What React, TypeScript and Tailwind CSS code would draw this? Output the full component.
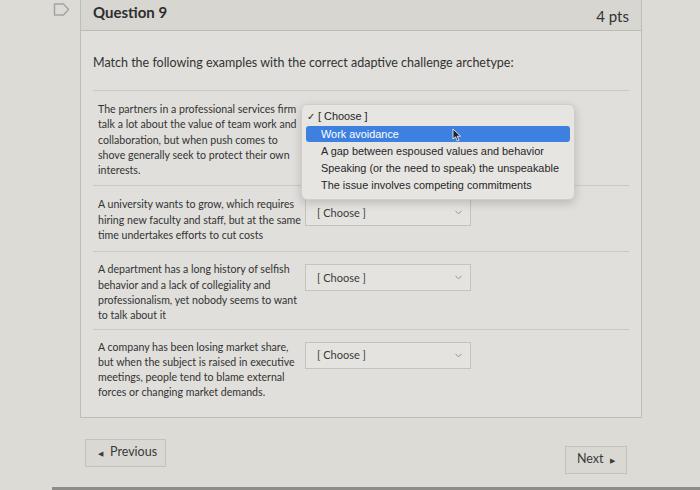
import { ChevronDown } from 'lucide-react';

const rows = [
  {
    text: 'The partners in a professional services firm talk a lot about the value of team work and collaboration, but when push comes to shove generally seek to protect their own interests.',
    open: true,
    pt: 'pt-[11px]',
    pb: 'pb-[7px]',
  },
  {
    text: 'A university wants to grow, which requires hiring new faculty and staff, but at the same time undertakes efforts to cut costs',
    open: false,
    pt: 'pt-[11px]',
    pb: 'pb-[8px]',
  },
  {
    text: 'A department has a long history of selfish behavior and a lack of collegiality and professionalism, yet nobody seems to want to talk about it',
    open: false,
    pt: 'pt-[10px]',
    pb: 'pb-[5px]',
  },
  {
    text: 'A company has been losing market share, but when the subject is raised in executive meetings, people tend to blame external forces or changing market demands.',
    open: false,
    pt: 'pt-[10px]',
    pb: 'pb-[16px]',
  },
];

const options = [
  'Work avoidance',
  'A gap between espoused values and behavior',
  'Speaking (or the need to speak) the unspeakable',
  'The issue involves competing commitments',
];

function Select({ hidden }: { hidden?: boolean }) {
  return (
    <div
      className={`flex h-[27px] w-[166px] items-center justify-between border border-[#c4c3be] bg-[#e4e3df] pl-[11px] pr-[6px] text-[11px] text-[#3b3b3b] ${hidden ? 'invisible' : ''}`}
    >
      <span>[ Choose ]</span>
      <ChevronDown size={11} strokeWidth={2} className="text-[#8c8c8c]" />
    </div>
  );
}

function Popup() {
  return (
    <div
      className="absolute left-[-4px] top-[2px] z-10 w-[274px] whitespace-nowrap rounded-[6px] border border-[#cfcecb] bg-[#e6e5e2] px-[4px] pb-[5px] pt-[3px] text-[10.9px] text-[#262626] shadow-[0_3px_10px_rgba(0,0,0,0.18)]"
      style={{ fontFamily: '"Liberation Sans", Arial, sans-serif' }}
    >
      <div className="flex h-[17px] items-center pl-[1px]">
        <span className="w-[11px] text-[10px]">✓</span>
        <span>[ Choose ]</span>
      </div>
      {options.map((o, i) => (
        <div
          key={o}
          className={
            i === 0
              ? 'relative my-[1px] flex h-[16px] items-center rounded-[3px] bg-[#3d80e0] pl-[15px] text-white'
              : 'flex h-[17px] items-center pl-[15px]'
          }
        >
          {o}
          {i === 0 && (
            <svg className="absolute left-[146px] top-[2px]" width="10" height="14" viewBox="0 0 10 14">
              <path d="M1 1 L1 11 L3.5 8.8 L5.4 13 L7 12.3 L5.2 8.2 L8.6 8.2 Z" fill="#222" stroke="#fff" strokeWidth="0.8" />
            </svg>
          )}
        </div>
      ))}
    </div>
  );
}

export default function App() {
  return (
    <div
      className="flex h-[490px] w-[700px] flex-col overflow-hidden bg-[#dcdbd6] text-[#343434]"
      style={{ fontFamily: 'Lato, "Open Sans", sans-serif' }}
    >
      <div className="flex">
        <div className="flex w-[80px] justify-end pr-[10px] pt-[3px]">
          <svg width="17" height="13" viewBox="0 0 17 13">
            <path d="M1.5 1 H10.5 L15.5 6.5 L10.5 12 H1.5 Z" fill="none" stroke="#a6a5a1" strokeWidth="1.5" strokeLinejoin="round" />
          </svg>
        </div>
        <div className="w-[562px] border-x border-b border-[#bebdb8] bg-[#e0dfdb]">
          <div className="flex h-[31px] items-start justify-between border-b border-[#bcbbb6] bg-[#d7d6d1] pl-[12px] pr-[12px]">
            <span className="pt-[1px] text-[15px] font-bold text-[#2e2e2e]">Question 9</span>
            <span className="pt-[5px] text-[15px] text-[#333]">4 pts</span>
          </div>
          <div className="px-[12px] pt-[24px]">
            <p className="text-[12.5px] leading-[16px] text-[#333]">
              Match the following examples with the correct adaptive challenge archetype:
            </p>
            <div className="mt-[19px] border-t border-[#cac9c4]">
              {rows.map((r, i) => (
                <div
                  key={i}
                  className={`flex pl-[5px] ${r.pt} ${r.pb} ${i > 0 ? 'border-t border-[#cac9c4]' : ''}`}
                >
                  <p className="w-[207px] text-[10.6px] leading-[15.3px] text-[#333]">{r.text}</p>
                  <div className="relative pt-[2px]">
                    <Select hidden={r.open} />
                    {r.open && <Popup />}
                  </div>
                </div>
              ))}
            </div>
          </div>
        </div>
      </div>
      <div className="flex justify-between pl-[85px] pr-[73px] pt-[21px]">
        <button className="flex h-[28px] w-[81px] items-center gap-[7px] border border-[#c3c2bd] bg-[#d9d8d3] pl-[12px] text-[12.5px] text-[#3a3a3a]">
          <span className="text-[7px]">◀</span>
          Previous
        </button>
        <button className="mt-[7px] flex h-[28px] w-[62px] items-center gap-[6px] border border-[#c3c2bd] bg-[#d9d8d3] pl-[11px] text-[12.5px] text-[#3a3a3a]">
          Next
          <span className="text-[7px]">▶</span>
        </button>
      </div>
      <div className="mt-auto ml-[52px] h-[3px] bg-[#8d8c88]" />
    </div>
  );
}
